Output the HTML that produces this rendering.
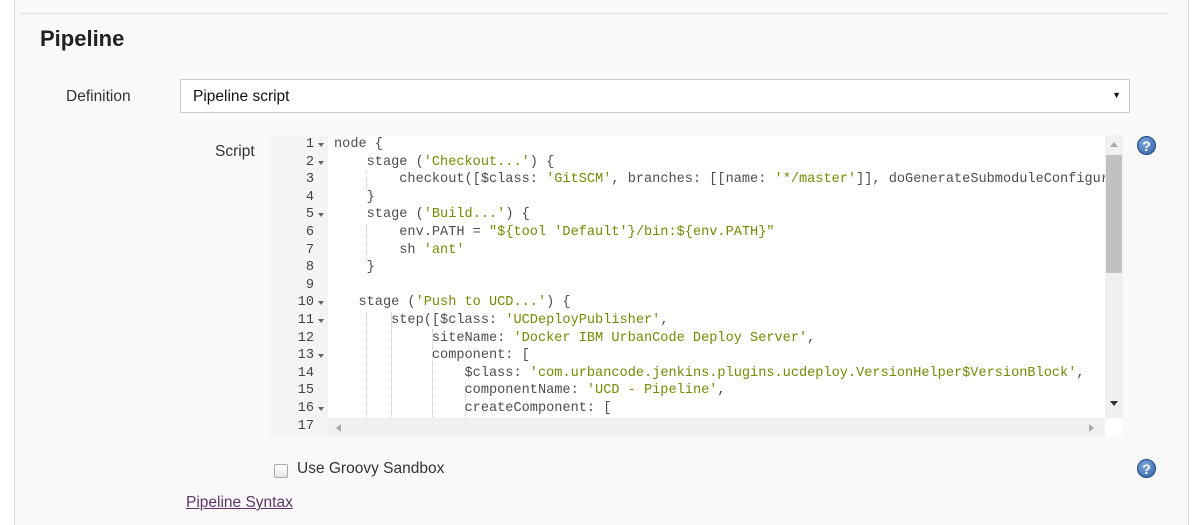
<!DOCTYPE html>
<html><head><meta charset="utf-8"><style>
body{margin:0;width:1200px;height:525px;background:#fff;font-family:"Liberation Sans",Arial,sans-serif;overflow:hidden;position:relative}
.panel{position:absolute;left:14px;top:0;width:1173px;height:525px;background:#f9f9f9;border-left:1px solid #ddd;border-right:1px solid #ddd}
.hr{position:absolute;left:20px;top:13px;width:1149px;height:1px;background:#ddd}
h1{position:absolute;left:40px;top:26px;margin:0;font-size:22px;font-weight:bold;color:#222}
.lbl{position:absolute;font-size:15.5px;color:#333}
.sel{position:absolute;left:180px;top:79px;width:950px;height:34px;border:1px solid #ccc;background:#fff;box-sizing:border-box;font-size:15.5px;color:#111;padding:8px 12px}
.sel .ar{position:absolute;right:8px;top:10px;font-size:9px}
.ed{position:absolute;left:270px;top:135px;width:853px;height:302px;background:#f4f4f4;overflow:hidden;border-radius:2px}
.code{position:absolute;left:58px;top:0;width:777px;height:283px;background:#fff;overflow:hidden}
.gut{position:absolute;left:0;top:1px;width:58px;font-family:"Liberation Mono",monospace;font-size:13.6px;line-height:17.6px;color:#444}
.gut div{position:relative;padding-right:14px;text-align:right;height:17.6px}
.gut .f::after{content:"";position:absolute;right:4px;top:7px;border-left:3px solid transparent;border-right:3px solid transparent;border-top:4px solid #666}
pre{margin:0;position:absolute;left:6px;top:1px;font-family:"Liberation Mono",monospace;font-size:13.6px;line-height:17.6px;color:#4d4d4c;white-space:pre}
.s{color:#718c00}
.g{position:absolute;width:0;border-left:1px dotted #ccc}
.vs{position:absolute;left:835px;top:0;width:18px;height:283px;background:#f0f0f0}
.th{position:absolute;left:1px;top:20px;width:16px;height:118px;background:#c1c1c1}
.hs{position:absolute;left:58px;top:283px;width:777px;height:19px;background:#f0f0f0}
.help{position:absolute;width:19px;height:19px;border-radius:50%;background:radial-gradient(circle at 40% 35%,#7ea6d8,#2e5fa5);border:1px solid #1f4a85;color:#fff;font-weight:bold;font-size:14px;text-align:center;line-height:19px;box-sizing:border-box}
.cb{position:absolute;left:274px;top:464px;width:12px;height:12px;border:1px solid #aaa;border-radius:2px;background:linear-gradient(#fff,#e6e6e6)}
a{position:absolute;left:186px;top:494px;font-size:15.5px;color:#5c3566;text-decoration:underline}
</style></head><body>
<div class="panel"></div>
<div class="hr"></div>
<h1>Pipeline</h1>
<div class="lbl" style="left:66px;top:88px">Definition</div>
<div class="sel">Pipeline script<span class="ar">▼</span></div>
<div class="lbl" style="left:215px;top:143px">Script</div>
<div class="ed">
<div class="gut">
<div class="f">1</div><div class="f">2</div><div>3</div><div>4</div><div class="f">5</div><div>6</div><div>7</div><div>8</div><div>9</div><div class="f">10</div><div class="f">11</div><div>12</div><div class="f">13</div><div>14</div><div>15</div><div class="f">16</div><div>17</div>
</div>
<div class="code">
<div class="g" style="left:38px;top:36px;height:18px"></div>
<div class="g" style="left:38px;top:89px;height:36px"></div>
<div class="g" style="left:38px;top:177px;height:110px"></div>
<div class="g" style="left:63px;top:177px;height:110px"></div>
<div class="g" style="left:104px;top:194px;height:90px"></div>
<div class="g" style="left:137px;top:247px;height:40px"></div>
<pre>node {
    stage (<span class="s">'Checkout...'</span>) {
        checkout([$class: <span class="s">'GitSCM'</span>, branches: [[name: <span class="s">'*/master'</span>]], doGenerateSubmoduleConfigurations: false
    }
    stage (<span class="s">'Build...'</span>) {
        env.PATH = <span class="s">"${tool 'Default'}/bin:${env.PATH}"</span>
        sh <span class="s">'ant'</span>
    }

   stage (<span class="s">'Push to UCD...'</span>) {
       step([$class: <span class="s">'UCDeployPublisher'</span>,
            siteName: <span class="s">'Docker IBM UrbanCode Deploy Server'</span>,
            component: [
                $class: <span class="s">'com.urbancode.jenkins.plugins.ucdeploy.VersionHelper$VersionBlock'</span>,
                componentName: <span class="s">'UCD - Pipeline'</span>,
                createComponent: [
</pre>
</div>
<div class="vs"><div style="position:absolute;left:5px;top:7px;border-left:4px solid transparent;border-right:4px solid transparent;border-bottom:5px solid #aaa"></div><div class="th"></div><div style="position:absolute;left:5px;top:266px;border-left:4px solid transparent;border-right:4px solid transparent;border-top:5px solid #333"></div></div>
<div class="hs"><div style="position:absolute;left:8px;top:6px;border-top:4px solid transparent;border-bottom:4px solid transparent;border-right:5px solid #aaa"></div><div style="position:absolute;left:761px;top:6px;border-top:4px solid transparent;border-bottom:4px solid transparent;border-left:5px solid #aaa"></div></div>
<div style="position:absolute;left:835px;top:283px;width:18px;height:19px;background:#fff"></div>
</div>
<div class="help" style="left:1137px;top:136px">?</div>
<div class="cb"></div>
<div class="lbl" style="left:297px;top:460px">Use Groovy Sandbox</div>
<div class="help" style="left:1137px;top:459px">?</div>
<a>Pipeline Syntax</a>
</body></html>
